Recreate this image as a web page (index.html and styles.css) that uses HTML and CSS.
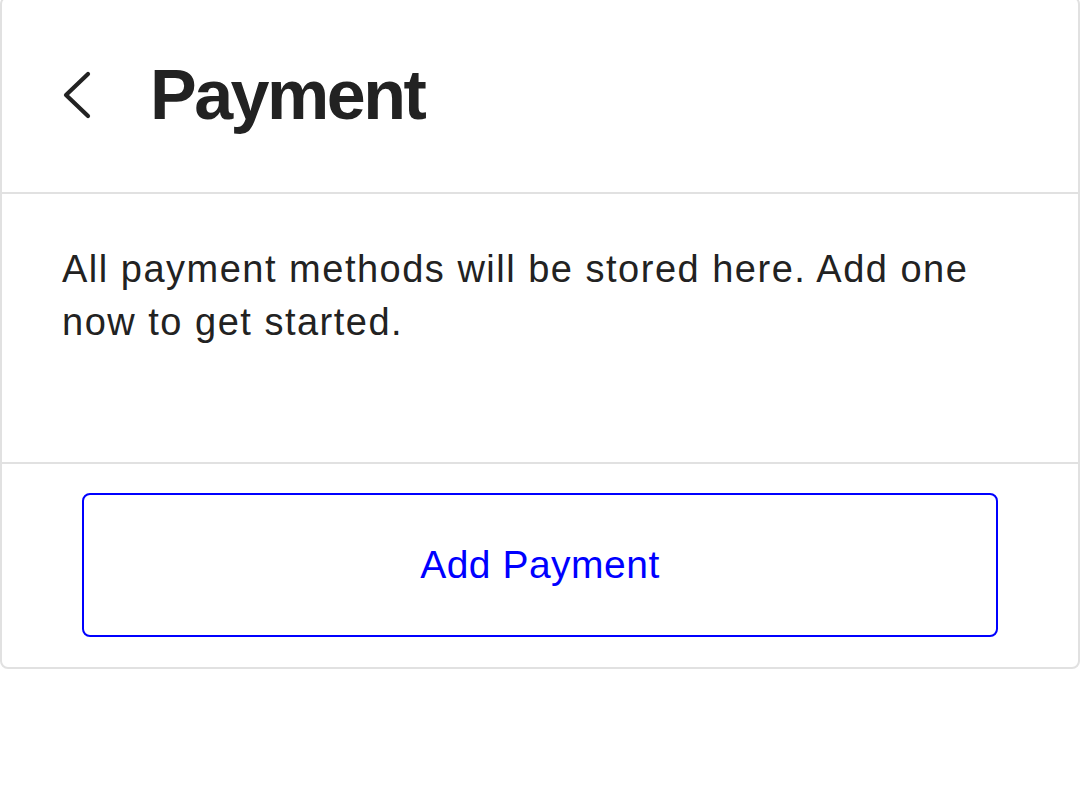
FILE: index.html
```html
<!DOCTYPE html>
<html lang="en">
<head>
    <meta charset="UTF-8">
    <meta name="viewport" content="width=device-width, initial-scale=1.0">
    <title>Payment</title>
    <link rel="stylesheet" href="styles.css">
</head>
<body>
    <div class="card">
        <div class="card-header">
            <button class="back-button" aria-label="Back">
                <svg width="30" height="48" viewBox="0 0 30 48">
                    <path d="M26 3 L4 24 L26 45" fill="none" stroke="#222" stroke-width="4.2" stroke-linecap="round" stroke-linejoin="round"/>
                </svg>
            </button>
            <h1 class="title">Payment</h1>
        </div>
        <div class="card-body">
            <p class="note">All payment methods will be stored here. Add one now to get started.</p>
        </div>
        <div class="card-footer">
            <button class="add-button">Add Payment</button>
        </div>
    </div>
</body>
</html>
```

FILE: styles.css
```css
body {
    margin: 0;
    background-color: #fff;
    font-family: "Liberation Sans", Arial, sans-serif;
    color: #222;
}
.card {
    margin-top: -4px;
    border: 2px solid #e1e1e1;
    border-radius: 8px;
    background-color: #fff;
}
.card-header {
    display: flex;
    align-items: center;
    height: 194px;
    padding: 0 60px;
    border-bottom: 2px solid #e1e1e1;
}
.back-button {
    display: flex;
    align-items: center;
    padding: 0;
    margin: 0 58px 0 0;
    border: none;
    background: none;
    cursor: pointer;
}
.title {
    margin: 0;
    font-size: 70px;
    font-weight: 700;
    letter-spacing: -2.5px;
    line-height: 1;
}
.card-body {
    height: 270px;
    padding: 49px 60px 0;
    box-sizing: border-box;
    border-bottom: 2px solid #e1e1e1;
}
.note {
    margin: 0;
    font-size: 38px;
    line-height: 53px;
    letter-spacing: 1.5px;
}
.card-footer {
    padding: 29px 80px 30px;
}
.add-button {
    display: block;
    width: 100%;
    height: 144px;
    padding: 0;
    border: 2px solid #0000ff;
    border-radius: 8px;
    background-color: #fff;
    color: #0000ff;
    font-family: "Liberation Sans", Arial, sans-serif;
    font-size: 39px;
    letter-spacing: 0.5px;
    cursor: pointer;
}
```
